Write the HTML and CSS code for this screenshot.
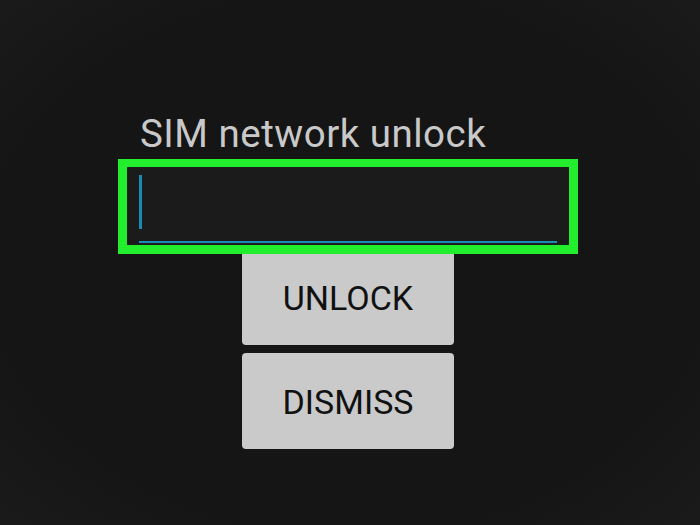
FILE: index.html
```html
<!DOCTYPE html>
<html>
<head>
<meta charset="utf-8">
<link rel="stylesheet" href="styles.css">
</head>
<body>
<div class="screen">
  <div class="dialog">
    <div class="title">SIM network unlock</div>
    <div class="field">
      <div class="edit"><span class="cursor"></span></div>
    </div>
    <div class="buttons">
      <div class="btn btn-first">UNLOCK</div>
      <div class="btn">DISMISS</div>
    </div>
  </div>
</div>
</body>
</html>
```

FILE: styles.css
```css
html, body {
  margin: 0;
  padding: 0;
  background: #151515;
}
.screen {
  width: 700px;
  height: 525px;
  background: radial-gradient(ellipse at center, #151515 70%, #1a1a1a 100%);
  font-family: Roboto, "Liberation Sans", sans-serif;
  overflow: hidden;
}
.dialog {
  width: 460px;
  margin-left: 118px;
  padding-top: 112px;
  display: flex;
  flex-direction: column;
}
.title {
  font-size: 38.5px;
  line-height: 44px;
  letter-spacing: 0.5px;
  color: #c9c9c9;
  padding-left: 22px;
  margin-bottom: 3px;
}
.field {
  position: relative;
  z-index: 1;
  box-sizing: border-box;
  height: 95px;
  border: 9px solid #22ee2e;
  border-top-width: 8px;
  background: #1b1b1b;
  padding: 8px 12px 1px 12px;
}
.edit {
  height: 66px;
  border-bottom: 2px solid #1a8cb4;
}
.cursor {
  display: block;
  width: 3px;
  height: 54px;
  background: #1a8cb4;
}
.buttons {
  align-self: center;
  display: flex;
  flex-direction: column;
  gap: 8px;
}
.btn {
  width: 212px;
  height: 96px;
  background: #cacaca;
  border-radius: 4px;
  color: #111;
  font-size: 34px;
  padding-top: 2px;
  box-sizing: border-box;
  display: flex;
  align-items: center;
  justify-content: center;
}
.btn-first {
  margin-top: -5px;
}
```
